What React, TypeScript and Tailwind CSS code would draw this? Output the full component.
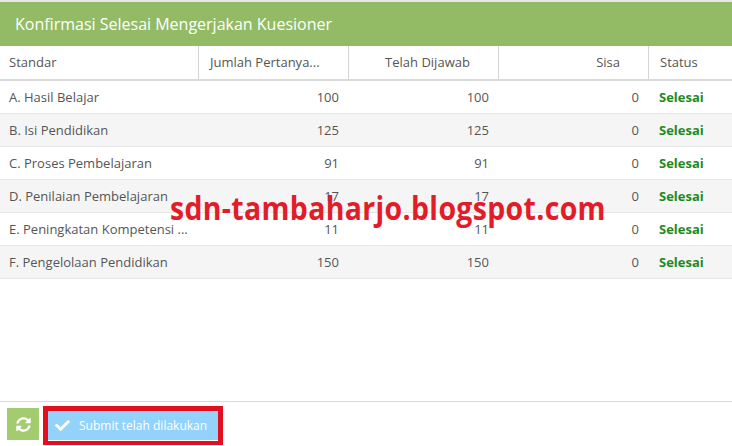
import { FaCheck, FaSyncAlt } from 'react-icons/fa'

const rows = [
  { name: 'A. Hasil Belajar', total: 100, answered: 100 },
  { name: 'B. Isi Pendidikan', total: 125, answered: 125 },
  { name: 'C. Proses Pembelajaran', total: 91, answered: 91 },
  { name: 'D. Penilaian Pembelajaran', total: 17, answered: 17 },
  { name: 'E. Peningkatan Kompetensi ...', total: 11, answered: 11 },
  { name: 'F. Pengelolaan Pendidikan', total: 150, answered: 150 },
]

const cols = 'grid grid-cols-[199px_150px_150px_150px_83px]'

export default function App() {
  return (
    <div className="relative w-[732px] h-[446px] flex flex-col bg-white overflow-hidden font-['Open_Sans',sans-serif] text-[13px] text-[#555]">
      <div className="h-[2px] bg-[#e8e8e8]" />
      <div className="h-[44px] flex items-center pl-[15px] bg-[#93bb65] text-white text-[16px]">
        Konfirmasi Selesai Mengerjakan Kuesioner
      </div>

      <div className={`${cols} h-[35px] border-b-2 border-[#d9d9d9] items-stretch`}>
        <div className="pl-[9px] flex items-center border-r border-[#d4d4d4]">Standar</div>
        <div className="pl-[11px] flex items-center border-r border-[#d4d4d4]">Jumlah Pertanya...</div>
        <div className="pl-[8px] flex items-center justify-center border-r border-[#d4d4d4]">Telah Dijawab</div>
        <div className="pr-[28px] flex items-center justify-end border-r border-[#d4d4d4]">Sisa</div>
        <div className="pl-[11px] flex items-center">Status</div>
      </div>

      {rows.map((row, i) => (
        <div
          key={row.name}
          className={`${cols} h-[33px] pt-[1px] items-center border-b border-[#e6e6e6] ${i % 2 === 1 ? 'bg-[#f5f5f5]' : 'bg-white'}`}
        >
          <div className="pl-[9px] whitespace-nowrap">{row.name}</div>
          <div className="pr-[10px] text-right">{row.total}</div>
          <div className="pr-[10px] text-right">{row.answered}</div>
          <div className="pr-[10px] text-right">0</div>
          <div className="pl-[10px] font-bold text-[#1e8a1e]">Selesai</div>
        </div>
      ))}

      <div className="flex-1" />

      <div className="h-[45px] border-t border-[#d9d9d9] flex items-start pl-[7px] pt-[6px] gap-[4px]">
        <button className="w-[32px] h-[32px] flex items-center justify-center bg-[#a3cc6e] text-white">
          <FaSyncAlt size={15} />
        </button>
        <div className="-mt-[2px] border-[5px] border-b-[4px] border-[#e2101e] w-[180px] h-[39px]">
          <div className="h-[29px] bg-[#93d2fb] text-white text-[12px] flex items-center pl-[7px] gap-[9px]">
            <FaCheck size={15} />
            <span className="leading-none">Submit telah dilakukan</span>
          </div>
        </div>
      </div>

      {/* watermark */}
      <div className="absolute left-[170px] top-[186px] origin-left scale-x-[0.862] font-['Open_Sans',sans-serif] font-bold text-[33px] leading-[44px] tracking-[0.4px] text-[#e21d2a] whitespace-nowrap">
        sdn-tambaharjo.blogspot.com
      </div>
    </div>
  )
}
